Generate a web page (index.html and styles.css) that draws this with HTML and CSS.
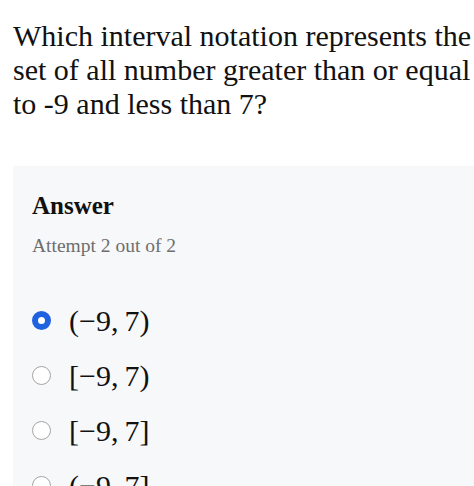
FILE: index.html
```html
<!DOCTYPE html>
<html lang="en">
<head>
    <meta charset="UTF-8">
    <meta name="viewport" content="width=device-width, initial-scale=1.0">
    <title>Interval notation question</title>
    <link rel="stylesheet" href="styles.css">
</head>
<body>
    <div class="question">
        Which interval notation represents the<br>
        set of all number greater than or equal<br>
        to -9 and less than 7?
    </div>

    <div class="panel">
        <h2 class="panel-title">Answer</h2>
        <p class="attempt">Attempt 2 out of 2</p>

        <div class="options">
            <label class="option">
                <span class="radio checked"></span>
                <span class="math">(−9,&thinsp;7)</span>
            </label>
            <label class="option">
                <span class="radio"></span>
                <span class="math">[−9,&thinsp;7)</span>
            </label>
            <label class="option">
                <span class="radio"></span>
                <span class="math">[−9,&thinsp;7]</span>
            </label>
            <label class="option">
                <span class="radio"></span>
                <span class="math">(−9,&thinsp;7]</span>
            </label>
        </div>
    </div>
</body>
</html>
```

FILE: styles.css
```css
* { margin: 0; padding: 0; box-sizing: border-box; }
html, body {
    overflow: hidden;
}
body {
    font-family: 'Liberation Serif', 'Times New Roman', serif;
    background: #fff;
    color: #111;
    width: 474px;
    height: 486px;
}
.question {
    padding: 19px 0 0 13px;
    font-size: 30px;
    line-height: 34px;
    white-space: nowrap;
}
.panel {
    margin: 45px 0 0 13px;
    padding: 25px 0 0 19px;
    background: #f7f8fa;
    min-height: 400px;
}
.panel-title {
    font-size: 25px;
    line-height: 30px;
    font-weight: bold;
    color: #111;
}
.attempt {
    margin-top: 13px;
    font-size: 19.5px;
    line-height: 24px;
    color: #6e6e6e;
}
.options {
    margin-top: 35px;
    display: flex;
    flex-direction: column;
}
.option {
    display: flex;
    align-items: center;
    gap: 18px;
    height: 55px;
}
.radio {
    width: 19px;
    height: 19px;
    border-radius: 50%;
    border: 1.5px solid #a4a4a6;
    background: #fff;
    flex-shrink: 0;
}
.radio.checked {
    border: 6px solid #1f62e0;
}
.math {
    font-size: 30px;
    line-height: 30px;
    color: #111;
}
```
